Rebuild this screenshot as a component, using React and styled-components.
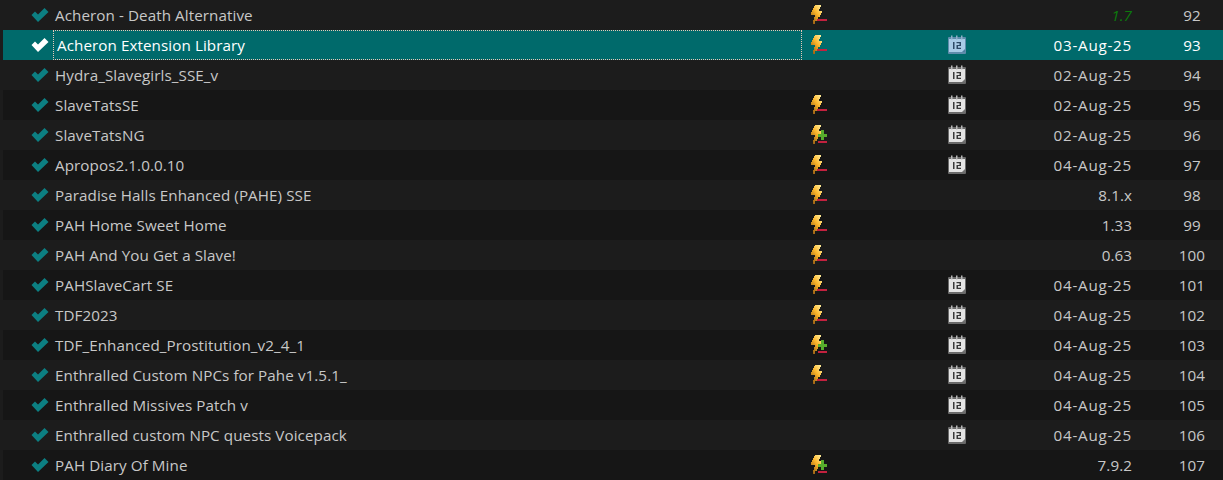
import React from "react";
import styled, { createGlobalStyle } from "styled-components";

const rows = [
  { name: "Acheron - Death Alternative", flag: "minus", version: "1.7", green: true, id: 92 },
  { name: "Acheron Extension Library", flag: "minus", cal: true, version: "03-Aug-25", id: 93, selected: true },
  { name: "Hydra_Slavegirls_SSE_v", cal: true, version: "02-Aug-25", id: 94 },
  { name: "SlaveTatsSE", flag: "minus", cal: true, version: "02-Aug-25", id: 95 },
  { name: "SlaveTatsNG", flag: "plus", cal: true, version: "02-Aug-25", id: 96 },
  { name: "Apropos2.1.0.0.10", flag: "minus", cal: true, version: "04-Aug-25", id: 97 },
  { name: "Paradise Halls Enhanced (PAHE) SSE", flag: "minus", version: "8.1.x", id: 98 },
  { name: "PAH Home Sweet Home", flag: "minus", version: "1.33", id: 99 },
  { name: "PAH And You Get a Slave!", flag: "minus", version: "0.63", id: 100 },
  { name: "PAHSlaveCart SE", flag: "minus", cal: true, version: "04-Aug-25", id: 101 },
  { name: "TDF2023", flag: "minus", cal: true, version: "04-Aug-25", id: 102 },
  { name: "TDF_Enhanced_Prostitution_v2_4_1", flag: "plus", cal: true, version: "04-Aug-25", id: 103 },
  { name: "Enthralled Custom NPCs for Pahe v1.5.1_", flag: "minus", cal: true, version: "04-Aug-25", id: 104 },
  { name: "Enthralled Missives Patch v", cal: true, version: "04-Aug-25", id: 105 },
  { name: "Enthralled custom NPC quests Voicepack", cal: true, version: "04-Aug-25", id: 106 },
  { name: "PAH Diary Of Mine", flag: "plus", version: "7.9.2", id: 107 },
];

const Global = createGlobalStyle`
  html, body { margin: 0; background: #1c1c1c; overflow: hidden; }
  body { font-family: "Open Sans", "Noto Sans", sans-serif; }
`;

const List = styled.div`
  width: 1223px;
  height: 480px;
  overflow: hidden;
  padding-left: 3px;
  box-sizing: border-box;
`;

const Row = styled.div`
  display: grid;
  grid-template-columns: 50px 749px 138px 60px 132px 88px;
  height: 30px;
  align-items: center;
  font-size: 15.2px;
  letter-spacing: 0.08px;
  color: ${(p) => (p.$selected ? "#ffffff" : "#c8c8c8")};
  background: ${(p) => (p.$selected ? "#006a6b" : p.$even ? "#161616" : "#1c1c1c")};
`;

const CheckCell = styled.div`
  display: flex;
  padding-left: 28px;
`;

const NameCell = styled.div`
  height: 30px;
  box-sizing: border-box;
  padding-left: ${(p) => (p.$selected ? "3px" : "2px")};
  white-space: nowrap;
  border: ${(p) => (p.$selected ? "1px dotted #e8c8b8" : "none")};
  line-height: ${(p) => (p.$selected ? "28px" : "30px")};
`;

const FlagCell = styled.div`
  display: flex;
  padding-left: 6px;
`;

const CalCell = styled.div`
  display: flex;
  padding-left: 7px;
`;

const Version = styled.div`
  text-align: right;
  line-height: 29px;
  letter-spacing: ${(p) => (p.$date ? "0.75px" : "0.08px")};
  color: ${(p) => (p.$green ? "#0c7a0c" : "inherit")};
  font-style: ${(p) => (p.$green ? "italic" : "normal")};
`;

const Num = styled.div`
  text-align: center;
  line-height: 29px;
  padding-left: 32px;
`;

const Check = ({ selected }) => (
  <svg width="18" height="14" viewBox="0 0 18 14">
    <path d="M0.5 7 L4 3.5 L7 6.5 L13.5 0 L17.5 4 L7 14 Z" fill={selected ? "#ffffff" : "#0c7f82"} />
  </svg>
);

const Bolt = ({ flag }) => (
  <svg width="20" height="22" viewBox="0 0 20 22" shapeRendering="crispEdges">
    <defs>
      <linearGradient id="bolt" x1="0.9" y1="0" x2="0.1" y2="1">
        <stop offset="0" stopColor="#fff0a0" />
        <stop offset="0.45" stopColor="#fcb52a" />
        <stop offset="1" stopColor="#8a5410" />
      </linearGradient>
    </defs>
    <path d="M7 1 H13 V3 H12 V5 H11 V7 H14 V9 H13 V11 H12 V13 H10 V15 H9 V17 H7 V20 H5 V16 H6 V13 H7 V11 H3 V8 H4 V6 H5 V4 H6 V2 H7 Z" fill="url(#bolt)" />
    {flag === "minus" && <rect x="9" y="15" width="10" height="2" fill="#c2213f" />}
    {flag === "plus" && (
      <path d="M13 6 H16 V10 H19 V13 H16 V16 H13 V13 H10 V10 H13 Z" fill="#58ad2c" />
    )}
    {flag === "plus" && <rect x="10" y="17" width="9" height="2" fill="#c2213f" />}
  </svg>
);

const Calendar = ({ selected }) => (
  <svg width="20" height="20" viewBox="0 0 20 20">
    <rect x="1" y="2" width="18" height="17" rx="1" fill={selected ? "#5f8cab" : "#6a6a6a"} />
    <rect x="2" y="4" width="16" height="13" fill={selected ? "#a8cbe6" : "#e4e4e4"} />
    <rect x="4" y="0.5" width="1.5" height="4" fill={selected ? "#8fb0c8" : "#b8b8b8"} />
    <rect x="9" y="0.5" width="1.5" height="4" fill={selected ? "#8fb0c8" : "#b8b8b8"} />
    <rect x="14" y="0.5" width="1.5" height="4" fill={selected ? "#8fb0c8" : "#b8b8b8"} />
    <path d="M6 7 H7.5 V14 H6 Z M9.5 7 H14 V11 H11 V12.7 H14 V14 H9.5 V10 H12.5 V8.3 H9.5 Z" fill={selected ? "#2c4a66" : "#3a3a3a"} />
    <path d="M15 17 L18 14 V17 Z" fill={selected ? "#4f7f9f" : "#707070"} />
  </svg>
);

const isDate = (v) => v.includes("-");

export default function App() {
  return (
    <List>
      <Global />
      {rows.map((r, i) => (
        <Row key={r.id} $selected={r.selected} $even={i % 2 === 1}>
          <CheckCell><Check selected={r.selected} /></CheckCell>
          <NameCell $selected={r.selected}>{r.name}</NameCell>
          <FlagCell>{r.flag && <Bolt flag={r.flag} />}</FlagCell>
          <CalCell>{r.cal && <Calendar selected={r.selected} />}</CalCell>
          <Version $green={r.green} $date={isDate(r.version)}>{r.version}</Version>
          <Num>{r.id}</Num>
        </Row>
      ))}
    </List>
  );
}
